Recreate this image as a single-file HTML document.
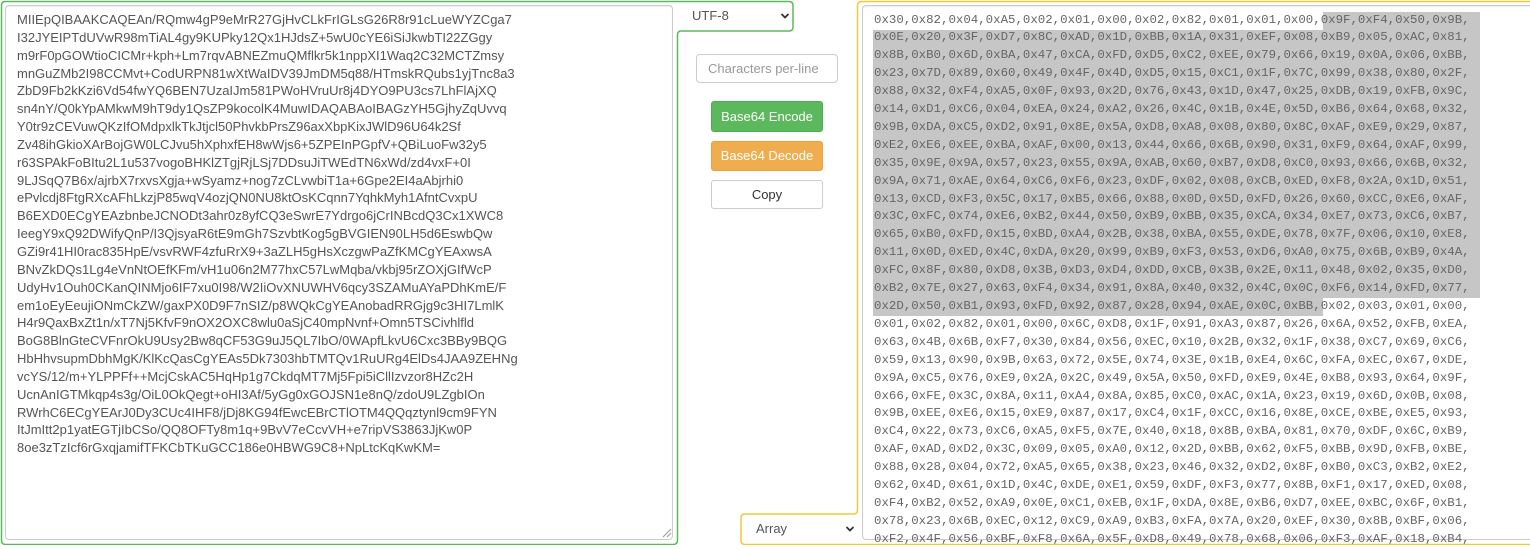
<!DOCTYPE html>
<html><head><meta charset="utf-8">
<style>
*{box-sizing:border-box;margin:0;padding:0}
body{width:1530px;height:550px;background:#fff;position:relative;overflow:hidden;font-family:"Liberation Sans",Arial,sans-serif}
.abs{position:absolute}
#lt{left:5px;top:5px;width:668px;height:535px;border:1px solid #ccc;border-radius:4px;box-shadow:inset 0 1px 1px rgba(0,0,0,.075)}
#ltx{left:17px;top:11px;font-size:13px;line-height:17.85px;color:#555;white-space:pre}
#rt{left:862px;top:5px;width:680px;height:535px;border:1px solid #ccc;border-radius:4px;box-shadow:inset 0 1px 1px rgba(0,0,0,.075)}
#rtx{left:874px;top:11.5px;font-family:"Liberation Mono",monospace;font-size:12.42px;line-height:17.9px;color:#666;white-space:pre}
.hl{background:#c6c6c6;position:absolute}
.sel{font-size:13px;color:#555}
.btn{position:absolute;border-radius:3px;font-size:13px;text-align:center}
</style></head><body>
<svg class="abs" style="left:0;top:0" width="1530" height="550">
<path d="M5 1.5 H789 Q793 1.5 793 5.5 V27 Q793 31 789 31 H681 Q677.5 31 677.5 35 V540 Q677.5 544.5 673 544.5 H5.5 Q1.5 544.5 1.5 540 V5.5 Q1.5 1.5 5 1.5 Z" fill="none" stroke="#5cb85c" stroke-width="1.5"/>
<path d="M1532 1.5 H861.5 Q857.5 1.5 857.5 5.5 V510 Q857.5 514 853.5 514 H745 Q741 514 741 518 V540 Q741 544.5 745 544.5 H1532" fill="none" stroke="#f0c93a" stroke-width="1.5"/>
</svg>
<div id="lt" class="abs"></div>
<svg class="abs" style="left:662px;top:528px" width="10" height="10"><path d="M1 9 L9 1 M5 9 L9 5" stroke="#999" stroke-width="1"/></svg>
<div id="ltx" class="abs">MIIEpQIBAAKCAQEAn/RQmw4gP9eMrR27GjHvCLkFrIGLsG26R8r91cLueWYZCga7
I32JYEIPTdUVwR98mTiAL4gy9KUPky12Qx1HJdsZ+5wU0cYE6iSiJkwbTI22ZGgy
m9rF0pGOWtioCICMr+kph+Lm7rqvABNEZmuQMflkr5k1nppXI1Waq2C32MCTZmsy
mnGuZMb2I98CCMvt+CodURPN81wXtWaIDV39JmDM5q88/HTmskRQubs1yjTnc8a3
ZbD9Fb2kKzi6Vd54fwYQ6BEN7UzaIJm581PWoHVruUr8j4DYO9PU3cs7LhFlAjXQ
sn4nY/Q0kYpAMkwM9hT9dy1QsZP9kocolK4MuwIDAQABAoIBAGzYH5GjhyZqUvvq
Y0tr9zCEVuwQKzIfOMdpxlkTkJtjcl50PhvkbPrsZ96axXbpKixJWlD96U64k2Sf
Zv48ihGkioXArBojGW0LCJvu5hXphxfEH8wWjs6+5ZPEInPGpfV+QBiLuoFw32y5
r63SPAkFoBItu2L1u537vogoBHKlZTgjRjLSj7DDsuJiTWEdTN6xWd/zd4vxF+0I
9LJSqQ7B6x/ajrbX7rxvsXgja+wSyamz+nog7zCLvwbiT1a+6Gpe2EI4aAbjrhi0
ePvlcdj8FtgRXcAFhLkzjP85wqV4ozjQN0NU8ktOsKCqnn7YqhkMyh1AfntCvxpU
B6EXD0ECgYEAzbnbeJCNODt3ahr0z8yfCQ3eSwrE7Ydrgo6jCrINBcdQ3Cx1XWC8
IeegY9xQ92DWifyQnP/I3QjsyaR6tE9mGh7SzvbtKog5gBVGIEN90LH5d6EswbQw
GZi9r41HI0rac835HpE/vsvRWF4zfuRrX9+3aZLH5gHsXczgwPaZfKMCgYEAxwsA
BNvZkDQs1Lg4eVnNtOEfKFm/vH1u06n2M77hxC57LwMqba/vkbj95rZOXjGIfWcP
UdyHv1Ouh0CKanQINMjo6IF7xu0I98/W2IiOvXNUWHV6qcy3SZAMuAYaPDhKmE/F
em1oEyEeujiONmCkZW/gaxPX0D9F7nSIZ/p8WQkCgYEAnobadRRGjg9c3HI7LmlK
H4r9QaxBxZt1n/xT7Nj5KfvF9nOX2OXC8wlu0aSjC40mpNvnf+Omn5TSCivhlfld
BoG8BlnGteCVFnrOkU9Usy2Bw8qCF53G9uJ5QL7IbO/0WApfLkvU6Cxc3BBy9BQG
HbHhvsupmDbhMgK/KlKcQasCgYEAs5Dk7303hbTMTQv1RuURg4ElDs4JAA9ZEHNg
vcYS/12/m+YLPPFf++McjCskAC5HqHp1g7CkdqMT7Mj5Fpi5iCllIzvzor8HZc2H
UcnAnIGTMkqp4s3g/OiL0OkQegt+oHI3Af/5yGg0xGOJSN1e8nQ/zdoU9LZgbIOn
RWrhC6ECgYEArJ0Dy3CUc4IHF8/jDj8KG94fEwcEBrCTlOTM4QQqztynl9cm9FYN
ItJmItt2p1yatEGTjIbCSo/QQ8OFTy8m1q+9BvV7eCcvVH+e7ripVS3863JjKw0P
8oe3zTzIcf6rGxqjamifTFKCbTKuGCC186e0HBWG9C8+NpLtcKqKwKM=</div>

<div class="abs sel" style="left:692px;top:8px">UTF-8</div>
<svg class="abs" style="left:780px;top:12px" width="10" height="8"><path d="M1.5 2 L5 5.5 L8.5 2" fill="none" stroke="#333" stroke-width="1.8"/></svg>

<div class="abs" style="left:696px;top:54px;width:142px;height:29px;border:1px solid #ccc;border-radius:4px;font-size:13px;color:#999;padding:6px 0 0 11px">Characters per-line</div>
<div class="btn" style="left:711px;top:101px;width:112px;height:31px;background:#5cb85c;border:1px solid #4cae4c;color:#fff;line-height:29px">Base64 Encode</div>
<div class="btn" style="left:711px;top:141px;width:112px;height:30px;background:#f0ad4e;border:1px solid #eea236;color:#fff;line-height:28px">Base64 Decode</div>
<div class="btn" style="left:711px;top:180px;width:112px;height:29px;background:#fff;border:1px solid #ccc;color:#333;line-height:27px">Copy</div>

<div class="abs sel" style="left:756px;top:521px">Array</div>
<svg class="abs" style="left:845px;top:525px" width="10" height="8"><path d="M1.5 2 L5 5.5 L8.5 2" fill="none" stroke="#333" stroke-width="1.8"/></svg>

<div id="rt" class="abs"></div>
<div class="hl" style="left:1323px;top:11.7px;width:157px;height:17.9px"></div>
<div class="hl" style="left:873px;top:29.6px;width:607px;height:268.5px"></div>
<div class="hl" style="left:873px;top:298px;width:450px;height:17.9px"></div>
<div id="rtx" class="abs">0x30,0x82,0x04,0xA5,0x02,0x01,0x00,0x02,0x82,0x01,0x01,0x00,0x9F,0xF4,0x50,0x9B,
0x0E,0x20,0x3F,0xD7,0x8C,0xAD,0x1D,0xBB,0x1A,0x31,0xEF,0x08,0xB9,0x05,0xAC,0x81,
0x8B,0xB0,0x6D,0xBA,0x47,0xCA,0xFD,0xD5,0xC2,0xEE,0x79,0x66,0x19,0x0A,0x06,0xBB,
0x23,0x7D,0x89,0x60,0x49,0x4F,0x4D,0xD5,0x15,0xC1,0x1F,0x7C,0x99,0x38,0x80,0x2F,
0x88,0x32,0xF4,0xA5,0x0F,0x93,0x2D,0x76,0x43,0x1D,0x47,0x25,0xDB,0x19,0xFB,0x9C,
0x14,0xD1,0xC6,0x04,0xEA,0x24,0xA2,0x26,0x4C,0x1B,0x4E,0x5D,0xB6,0x64,0x68,0x32,
0x9B,0xDA,0xC5,0xD2,0x91,0x8E,0x5A,0xD8,0xA8,0x08,0x80,0x8C,0xAF,0xE9,0x29,0x87,
0xE2,0xE6,0xEE,0xBA,0xAF,0x00,0x13,0x44,0x66,0x6B,0x90,0x31,0xF9,0x64,0xAF,0x99,
0x35,0x9E,0x9A,0x57,0x23,0x55,0x9A,0xAB,0x60,0xB7,0xD8,0xC0,0x93,0x66,0x6B,0x32,
0x9A,0x71,0xAE,0x64,0xC6,0xF6,0x23,0xDF,0x02,0x08,0xCB,0xED,0xF8,0x2A,0x1D,0x51,
0x13,0xCD,0xF3,0x5C,0x17,0xB5,0x66,0x88,0x0D,0x5D,0xFD,0x26,0x60,0xCC,0xE6,0xAF,
0x3C,0xFC,0x74,0xE6,0xB2,0x44,0x50,0xB9,0xBB,0x35,0xCA,0x34,0xE7,0x73,0xC6,0xB7,
0x65,0xB0,0xFD,0x15,0xBD,0xA4,0x2B,0x38,0xBA,0x55,0xDE,0x78,0x7F,0x06,0x10,0xE8,
0x11,0x0D,0xED,0x4C,0xDA,0x20,0x99,0xB9,0xF3,0x53,0xD6,0xA0,0x75,0x6B,0xB9,0x4A,
0xFC,0x8F,0x80,0xD8,0x3B,0xD3,0xD4,0xDD,0xCB,0x3B,0x2E,0x11,0x48,0x02,0x35,0xD0,
0xB2,0x7E,0x27,0x63,0xF4,0x34,0x91,0x8A,0x40,0x32,0x4C,0x0C,0xF6,0x14,0xFD,0x77,
0x2D,0x50,0xB1,0x93,0xFD,0x92,0x87,0x28,0x94,0xAE,0x0C,0xBB,0x02,0x03,0x01,0x00,
0x01,0x02,0x82,0x01,0x00,0x6C,0xD8,0x1F,0x91,0xA3,0x87,0x26,0x6A,0x52,0xFB,0xEA,
0x63,0x4B,0x6B,0xF7,0x30,0x84,0x56,0xEC,0x10,0x2B,0x32,0x1F,0x38,0xC7,0x69,0xC6,
0x59,0x13,0x90,0x9B,0x63,0x72,0x5E,0x74,0x3E,0x1B,0xE4,0x6C,0xFA,0xEC,0x67,0xDE,
0x9A,0xC5,0x76,0xE9,0x2A,0x2C,0x49,0x5A,0x50,0xFD,0xE9,0x4E,0xB8,0x93,0x64,0x9F,
0x66,0xFE,0x3C,0x8A,0x11,0xA4,0x8A,0x85,0xC0,0xAC,0x1A,0x23,0x19,0x6D,0x0B,0x08,
0x9B,0xEE,0xE6,0x15,0xE9,0x87,0x17,0xC4,0x1F,0xCC,0x16,0x8E,0xCE,0xBE,0xE5,0x93,
0xC4,0x22,0x73,0xC6,0xA5,0xF5,0x7E,0x40,0x18,0x8B,0xBA,0x81,0x70,0xDF,0x6C,0xB9,
0xAF,0xAD,0xD2,0x3C,0x09,0x05,0xA0,0x12,0x2D,0xBB,0x62,0xF5,0xBB,0x9D,0xFB,0xBE,
0x88,0x28,0x04,0x72,0xA5,0x65,0x38,0x23,0x46,0x32,0xD2,0x8F,0xB0,0xC3,0xB2,0xE2,
0x62,0x4D,0x61,0x1D,0x4C,0xDE,0xE1,0x59,0xDF,0xF3,0x77,0x8B,0xF1,0x17,0xED,0x08,
0xF4,0xB2,0x52,0xA9,0x0E,0xC1,0xEB,0x1F,0xDA,0x8E,0xB6,0xD7,0xEE,0xBC,0x6F,0xB1,
0x78,0x23,0x6B,0xEC,0x12,0xC9,0xA9,0xB3,0xFA,0x7A,0x20,0xEF,0x30,0x8B,0xBF,0x06,
0xF2,0x4F,0x56,0xBF,0xF8,0x6A,0x5F,0xD8,0x49,0x78,0x68,0x06,0xF3,0xAF,0x18,0xB4,</div>
<div class="abs" style="left:0;top:545px;width:1530px;height:5px;background:#fff"></div>
</body></html>
